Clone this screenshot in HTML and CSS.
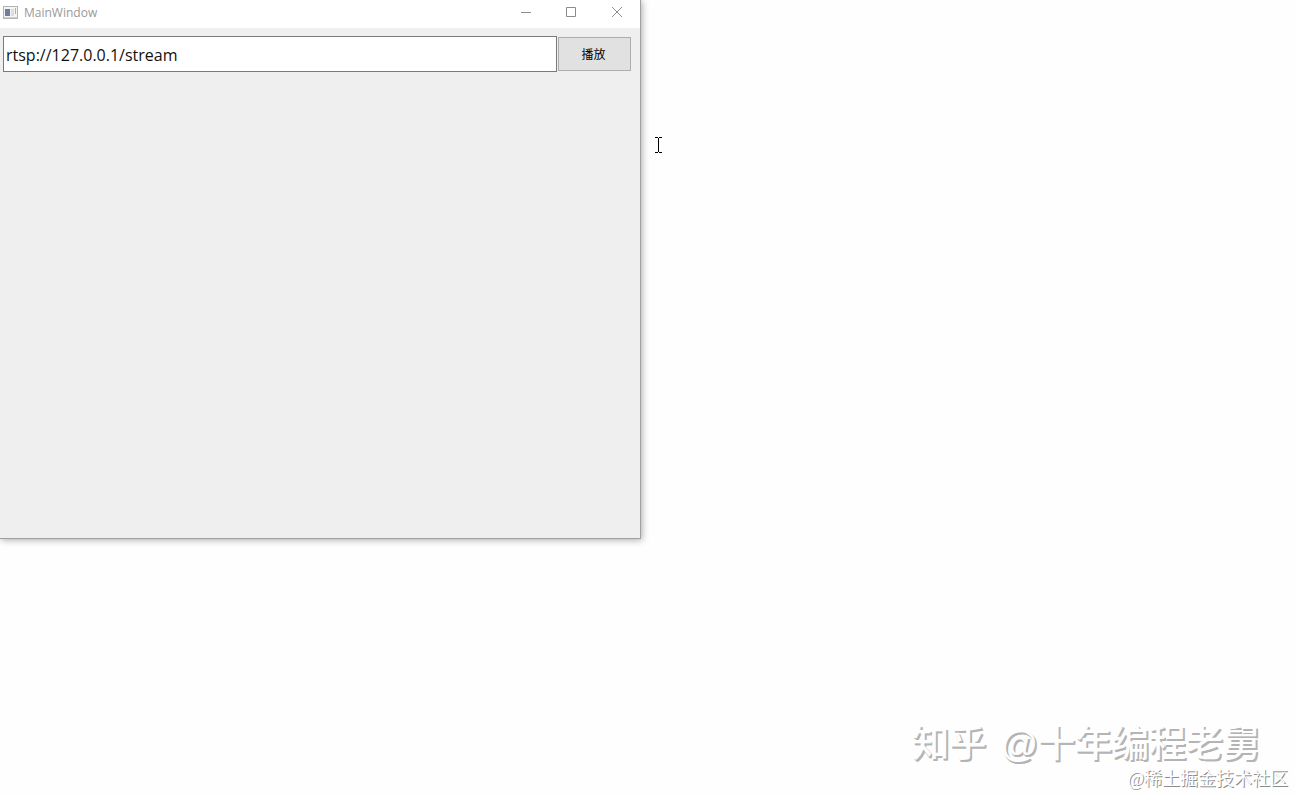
FILE: index.html
```html
<!DOCTYPE html>
<html lang="zh-CN">
<head>
<meta charset="utf-8">
<meta name="viewport" content="width=device-width, initial-scale=1">
<title>MainWindow</title>
<link rel="stylesheet" href="styles.css">
</head>
<body class="desktop">
  <main class="window">
    <header class="titlebar">
      <svg class="app-icon" width="15" height="13" viewBox="0 0 15 13" aria-hidden="true">
        <rect x=".5" y=".5" width="14" height="12" fill="#f4f4f4" stroke="#b2b2b2"/>
        <rect x="2" y="3" width="5" height="7" fill="#737b98"/>
        <rect x="8" y="3" width="3" height="7" fill="#d9dfe0"/>
        <path d="M12.500 2v6" stroke="#a9b3ad"/>
        <path d="M1 11.500h13" stroke="#d0d0d0"/>
      </svg>
      <h1 class="title">MainWindow</h1>
      <div class="controls">
        <button class="control" type="button" aria-label="Minimize">
          <svg width="12" height="12" viewBox="0 0 12 12"><path d="M2 6.500h10"/></svg>
        </button>
        <button class="control" type="button" aria-label="Maximize">
          <svg width="12" height="12" viewBox="0 0 12 12"><path d="M1.500 1.500h9v9h-9z"/></svg>
        </button>
        <button class="control" type="button" aria-label="Close">
          <svg width="12" height="12" viewBox="0 0 12 12"><path d="M1 1l10 10M11 1L1 11"/></svg>
        </button>
      </div>
    </header>
    <form class="toolbar">
      <input class="address" type="text" aria-label="Stream URL" value="rtsp://127.0.0.1/stream">
      <button class="play" type="button">播放</button>
    </form>
  </main>
  <svg class="cursor" width="7" height="16" viewBox="0 0 7 16" aria-hidden="true">
    <path d="M0 .5h3M4 .5h3M3.500 1v14M0 15.500h3M4 15.500h3"/>
  </svg>
  <footer class="credits">
    <p class="author"><span class="site">知乎</span> @十年编程老舅</p>
    <p class="community">@稀土掘金技术社区</p>
  </footer>
</body>
</html>
```
FILE: styles.css
```css
* {
  box-sizing: border-box;
}

.desktop {
  position: relative;
  display: flex;
  flex-direction: column;
  justify-content: space-between;
  align-items: flex-start;
  min-height: 100vh;
  margin: 0;
  background: #fefefe;
  font-family: "Noto Sans", "Noto Sans CJK SC", sans-serif;
}

.window {
  display: flex;
  flex-direction: column;
  width: 49.5%;
  height: 67.8vh;
  border-right: 1px solid #a0a0a0;
  border-bottom: 1px solid #a0a0a0;
  background: #efefef;
  box-shadow: 1px 1px 7px #aaa;
}

.titlebar {
  display: flex;
  align-items: center;
  height: 28px;
  padding: 0 0 4px 3px;
  background: #fff;
}

.app-icon {
  flex: none;
}

.title {
  flex: 1;
  margin: 2px 0 0 6px;
  color: #999;
  font: 400 12px/16px "Open Sans", "Noto Sans", sans-serif;
}

.controls {
  display: flex;
}

.control {
  display: flex;
  align-items: center;
  justify-content: center;
  width: 46px;
  height: 24px;
  padding: 0;
  border: 0;
  background: none;
}

.control svg {
  fill: none;
  stroke: #8c8c8c;
}

.toolbar {
  display: flex;
  align-items: center;
  gap: 1px;
  padding: 8px 9px 0 3px;
}

.address {
  flex: 1;
  min-width: 0;
  height: 36px;
  padding: 1px 2px 0;
  border: 1px solid #7a7a7a;
  border-radius: 0;
  background: #fff;
  color: #111;
  font: 400 16px/24px "Open Sans", "Noto Sans", sans-serif;
}

.play {
  width: 73px;
  height: 34px;
  padding: 0 2px 0 0;
  border: 1px solid #adadad;
  background: #e1e1e1;
  color: #000;
  font: 400 12px/16px "Noto Sans CJK SC", sans-serif;
}

.cursor {
  position: absolute;
  top: 137px;
  left: 655px;
  fill: none;
  stroke: #000;
}

.credits {
  align-self: flex-end;
  padding: 0 7px 4px 0;
  text-align: right;
}

.author {
  margin: 0 28px 0 0;
  color: #fefefe;
  font: 500 37px/44px "Liberation Sans", "Noto Sans CJK SC", sans-serif;
  text-shadow: 1px 2px 0 #b4b4b4, 2px 2px 0 #b4b4b4;
}

.site {
  margin-right: 4px;
}

.community {
  margin: 0;
  color: #fefefe;
  font: 400 18px/24px "Liberation Serif", "Noto Sans CJK SC", sans-serif;
  text-shadow: 1px 1px 0 #8c8c8c;
}
```
